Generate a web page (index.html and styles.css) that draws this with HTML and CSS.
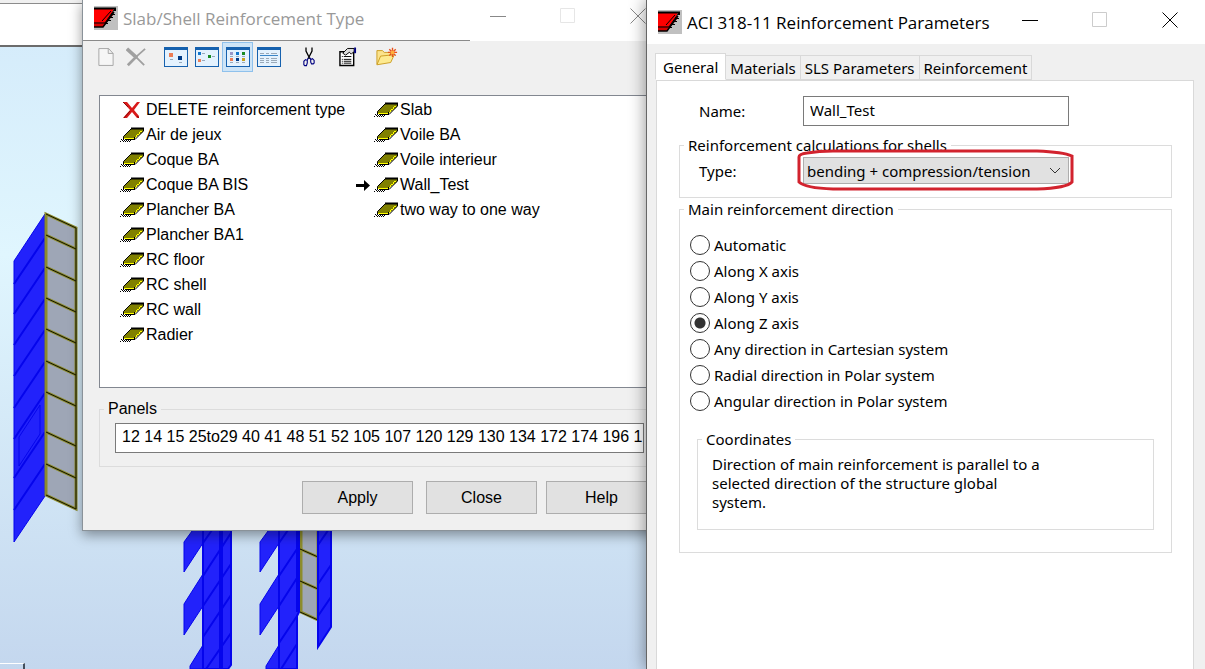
FILE: index.html
```
<!DOCTYPE html>
<html lang="en">
<head>
  <meta charset="UTF-8" />
  <meta name="viewport" content="width=device-width, initial-scale=1.0"/>
  <title>Slab/Shell Reinforcement Type</title>
  <link rel="stylesheet" href="styles.css">
</head>
<body>
  <!-- shared icons -->
  <svg class="defs" width="0" height="0" aria-hidden="true">
    <symbol id="app-icon" viewBox="0 0 24 24">
      <rect width="24" height="24" fill="#c0c0c0"/>
      <path d="M0 3H20L12 16H0Z" fill="#f00"/>
      <path d="M0 16H11L19 5V9L9 21H0Z" fill="#d80000"/>
      <path d="M0 2.500H21V5" fill="none" stroke="#000" stroke-width="2"/>
      <path d="M20 4L11 17H0" fill="none" stroke="#000"/>
      <path d="M20 6L9 21H0" fill="none" stroke="#000" stroke-width="1.500"/>
      <path d="M17 5L8 15M17 8.500h4M15 11.500h4M13 14.500h4M11 17.500h3" stroke="#000"/>
    </symbol>
    <symbol id="slab" viewBox="0 0 24 16">
      <path d="M11 2H23V5L14 12H3V10Z" fill="#808000"/>
      <path d="M11 1.500H24" stroke="#000" stroke-width="2"/>
      <path d="M11.500 1.500L3.500 9.500V13" fill="none" stroke="#000"/>
      <path d="M4 11.500H14M14 10.500h2M16.500 10V8M17 7.500h2M19.500 7V5M20 4.500h2" fill="none" stroke="#ff0"/>
      <path d="M5 12.500H15L23.500 4V2" fill="none" stroke="#000"/>
      <path d="M14.500 10V13" stroke="#000"/>
      <path d="M0 14.500h1M2 13.500h1M1 12.500h1M3 14.500h1M5 14.500h1M7 14.500h1M9 14.500h1M4 13.500h1M6 13.500h1M8 13.500h1M10 13.500h1" stroke="#000"/>
    </symbol>
  </svg>

  <div class="desktop">
    <div class="strip"></div>
    <div class="ribbon"></div>

    <svg class="model" width="400" height="669" aria-hidden="true">
      <g class="wall">
        <path d="M14 261L45 214V496L14 542Z"/>
        <path d="M14 284l31-46M14 314l31-46M14 345l31-46M14 376l31-46M14 408l31-46M14 439l31-46M14 478l31-46M14 510l31-46"/>
        <path class="opening" d="M19 437l21-32v29l-21 32Z"/>
      </g>
      <g class="slabs">
        <path d="M46 214l30 14v281l-30-14Z"/>
        <path d="M46 235l30 14M46 267l30 14M46 298l30 14M46 329l30 14M46 361l30 14M46 392l30 14M46 432l30 14M46 464l30 14"/>
        <path class="edge" d="M46 214l30 14v281l-30-14M46 235l30 14M46 267l30 14M46 298l30 14M46 329l30 14M46 361l30 14M46 392l30 14M46 432l30 14M46 464l30 14"/>
      </g>
      <g class="slabs">
        <path d="M301 520h17v100l-17-8Z"/>
        <path d="M300 549l18 8M300 581l18 8"/>
        <path class="edge" d="M300 549l18 8M300 581l18 8M300 612l18 8"/>
      </g>
      <g class="wall">
        <path d="M203 516V543L184 572V542ZM203 574V606L184 635V604ZM203 645V669H190V666Z"/>
        <path d="M203 520H231V665L228 669H203Z"/>
        <path d="M203 543l16-23M203 576l28-43M203 606l28-42M206 669l25-36M203 543V669M220 520V669M222 520V669M203 637l28-42"/>
      </g>
      <g class="wall">
        <path d="M279 516V543L260 572V542ZM279 574V606L260 635V604ZM279 645V669H266V666Z"/>
        <path d="M279 520H299V612L297 616V669H279Z"/>
        <path d="M279 543l16-23M279 576l20-30M279 606l18-28M279 643l18-27M281 669l16-25M297 520V612"/>
        <path d="M318 520H331V627L318 647Z"/>
        <path d="M318 545l13-19M318 584l13-19M318 616l13-19"/>
      </g>
    </svg>
    <div class="taskbar-piece"></div>

    <section class="dialog type-dialog">
      <header class="titlebar">
        <svg class="app-icon" aria-hidden="true"><use href="#app-icon"/></svg>
        <h2>Slab/Shell Reinforcement Type</h2>
        <div class="window-buttons">
          <button aria-label="Minimize"><svg viewBox="0 0 16 16"><path d="M0 8.500H16"/></svg></button>
          <button aria-label="Maximize" class="off"><svg viewBox="0 0 16 16"><path d="M.5.500H14.500V14.500H.5Z"/></svg></button>
          <button aria-label="Close"><svg viewBox="0 0 16 16"><path d="M.5.500l15 15M15.500.500l-15 15"/></svg></button>
        </div>
      </header>

      <div class="toolbar">
        <button aria-label="New" class="tool new">
          <svg width="18" height="20" viewBox="0 0 18 20"><path d="M1 .5H12L17 6V19.500H1ZM11.500.500V6H17" fill="#f6f6f6" stroke="#a0a0a0"/></svg>
        </button>
        <button aria-label="Delete" class="tool delete">
          <svg width="22" height="20" viewBox="0 0 22 20" fill="none" stroke="#a0a0a0"><path d="M1 1L12 11" stroke-width="4"/><path d="M10 9L20 19M21 1L12 9" stroke-width="2"/><path d="M12 9L2 19" stroke-width="3"/></svg>
        </button>
        <button aria-label="Large icons" class="tool view">
          <svg width="24" height="20" viewBox="0 0 24 20"><rect x=".5" y=".5" width="23" height="19" fill="#e4f2fe" stroke="#1661ae"/><path d="M0 0h24v3H0Z" fill="#1661ae"/><path d="M5 6h4v4H5Z" fill="#ed7d55"/><path d="M14 9h4v4h-4Z" fill="#003a86"/><path d="M6 12.500h3M15 15.500h3" stroke="#9ab"/></svg>
        </button>
        <button aria-label="Small icons" class="tool view">
          <svg width="24" height="20" viewBox="0 0 24 20"><rect x=".5" y=".5" width="23" height="19" fill="#e4f2fe" stroke="#1661ae"/><path d="M0 0h24v3H0Z" fill="#1661ae"/><path d="M3 5h3v3H3Z" fill="#1476cc"/><path d="M13 8h3v3h-3Z" fill="#178a22"/><path d="M3 12h3v3H3Z" fill="#ed7d55"/><path d="M7 6.500h3M17 9.500h3M7 13.500h3" stroke="#9ab"/></svg>
        </button>
        <button aria-label="List" class="tool view active">
          <svg width="24" height="20" viewBox="0 0 24 20"><rect x=".5" y=".5" width="23" height="19" fill="#e4f2fe" stroke="#1661ae"/><path d="M0 0h24v3H0Z" fill="#1661ae"/><path d="M4 5h3v3H4Z" fill="#9a98c8"/><path d="M10 5h3v3h-3Z" fill="#1476cc"/><path d="M16 5h3v3h-3Z" fill="#178a22"/><path d="M4 11h3v3H4Z" fill="#ed7d55"/><path d="M10 11h3v3h-3Z" fill="#003a86"/><path d="M16 11h3v3h-3Z" fill="#c5a11e"/><path d="M4 9.500h3M10 9.500h3M16 9.500h3M4 15.500h3M10 15.500h3M16 15.500h3" stroke="#9ab"/></svg>
        </button>
        <button aria-label="Details" class="tool view">
          <svg width="24" height="20" viewBox="0 0 24 20"><rect x=".5" y=".5" width="23" height="19" fill="#e4f2fe" stroke="#1661ae"/><path d="M0 0h24v3H0Z" fill="#1661ae"/><path d="M3 8.500h18" stroke="#3b86c8"/><path d="M3 6.500h4M9 6.500h3M14 6.500h6M3 11.500h4M9 11.500h3M14 11.500h6M3 13.500h4M9 13.500h3M14 13.500h6M3 15.500h4M9 15.500h3M14 15.500h6" stroke="#9aa9b8"/></svg>
        </button>
        <button aria-label="Cut" class="tool cut">
          <svg width="14" height="22" viewBox="0 0 14 22" fill="none"><path d="M3.500 0V4L8 13M10.500 0V4L6 13" stroke="#000" stroke-width="1.500"/><path d="M6 12L5 15L3 14L1 16V20L2 21H4L5 18V15M8 12L9 14L11 13L13 15V18L12 19H10L9 17V14" stroke="#000080" stroke-width="1.300"/></svg>
        </button>
        <button aria-label="Properties" class="tool props">
          <svg width="19" height="20" viewBox="0 0 19 20"><path d="M1 4.500H15.500V19H1Z" fill="#fff" stroke="#000" stroke-width="1.500"/><path d="M3 9.500h1M5 9.500h8M3 12.500h1M5 12.500h8M3 14.500h1M5 14.500h8M3 16.500h1M5 16.500h8" stroke="#000"/><path d="M4 6L9 1H16V4L13 7L11 5L7 8Z" fill="#ddd" stroke="#000"/><path d="M16 0h2v6h-2Z" fill="#000080"/></svg>
        </button>
        <button aria-label="Open" class="tool open">
          <svg width="24" height="20" viewBox="0 0 24 20"><path d="M1 18V3H7L9 5H16V9" fill="#fbe38c" stroke="#c99a1e"/><path d="M1 18.500L5 9L20 7.500L16 16Z" fill="#fdea90" stroke="#c99a1e"/><path d="M18 0V10M13 5H23M14.500 1.500l7 7M21.500 1.500l-7 7" stroke="#e8501a" stroke-width="1.500"/><circle cx="18" cy="5" r="2" fill="#ffb03a"/></svg>
        </button>
      </div>

      <ul class="type-list">
        <li><span class="mark"></span><svg class="icon" viewBox="0 0 24 16"><path d="M3 0H7L12 6L17 0H20L14 8L19 14V16H17L12 10L7 16H3L10 8Z" fill="#d91a1a"/><path d="M3 0L8 5M10 9L4 16M17 14l2 2" stroke="#8e0a0a"/></svg>DELETE reinforcement type</li>
        <li><span class="mark"></span><svg class="icon"><use href="#slab"/></svg>Air de jeux</li>
        <li><span class="mark"></span><svg class="icon"><use href="#slab"/></svg>Coque BA</li>
        <li><span class="mark"></span><svg class="icon"><use href="#slab"/></svg>Coque BA BIS</li>
        <li><span class="mark"></span><svg class="icon"><use href="#slab"/></svg>Plancher BA</li>
        <li><span class="mark"></span><svg class="icon"><use href="#slab"/></svg>Plancher BA1</li>
        <li><span class="mark"></span><svg class="icon"><use href="#slab"/></svg>RC floor</li>
        <li><span class="mark"></span><svg class="icon"><use href="#slab"/></svg>RC shell</li>
        <li><span class="mark"></span><svg class="icon"><use href="#slab"/></svg>RC wall</li>
        <li><span class="mark"></span><svg class="icon"><use href="#slab"/></svg>Radier</li>
        <li><span class="mark"></span><svg class="icon"><use href="#slab"/></svg>Slab</li>
        <li><span class="mark"></span><svg class="icon"><use href="#slab"/></svg>Voile BA</li>
        <li><span class="mark"></span><svg class="icon"><use href="#slab"/></svg>Voile interieur</li>
        <li><span class="mark"><svg width="14" height="12" viewBox="0 0 14 12"><path d="M0 5H8V1L14 6.500L8 12V8H0Z"/></svg></span><svg class="icon"><use href="#slab"/></svg>Wall_Test</li>
        <li><span class="mark"></span><svg class="icon"><use href="#slab"/></svg>two way to one way</li>
      </ul>

      <fieldset class="panels">
        <legend>Panels</legend>
        <input type="text" aria-label="Panels" value="12 14 15 25to29 40 41 48 51 52 105 107 120 129 130 134 172 174 196 1">
      </fieldset>

      <div class="actions">
        <button>Apply</button>
        <button>Close</button>
        <button>Help</button>
      </div>
    </section>

    <section class="dialog params-dialog">
      <header class="titlebar">
        <svg class="app-icon" aria-hidden="true"><use href="#app-icon"/></svg>
        <h2>ACI 318-11 Reinforcement Parameters</h2>
        <div class="window-buttons">
          <button aria-label="Minimize"><svg viewBox="0 0 16 16"><path d="M0 8.500H16"/></svg></button>
          <button aria-label="Maximize" class="off"><svg viewBox="0 0 16 16"><path d="M.5.500H14.500V14.500H.5Z"/></svg></button>
          <button aria-label="Close"><svg viewBox="0 0 16 16"><path d="M.5.500l15 15M15.500.500l-15 15"/></svg></button>
        </div>
      </header>

      <div class="tabs">
        <button class="selected">General</button>
        <button>Materials</button>
        <button>SLS Parameters</button>
        <button>Reinforcement</button>
      </div>

      <div class="tab-page">
        <div class="field name-field">
          <label for="name">Name:</label>
          <input type="text" id="name" value="Wall_Test">
        </div>

        <fieldset class="calc">
          <legend>Reinforcement calculations for shells</legend>
          <div class="field">
            <label for="type">Type:</label>
            <div class="select-wrap">
              <select id="type">
                <option>bending + compression/tension</option>
              </select>
              <svg class="chevron" width="12" height="8" viewBox="0 0 12 8"><path d="M1 1l5 5 5-5"/></svg>
              <svg class="highlight" width="278" height="42" viewBox="0 0 278 42"><path d="M2 8Q2 5 10 4Q22 2 36 2H240Q266 3 275 7V33Q270 39 240 40H36Q8 39 2 33Z"/></svg>
            </div>
          </div>
        </fieldset>

        <fieldset class="direction">
          <legend>Main reinforcement direction</legend>
          <div class="radios">
            <label><input type="radio" name="dir">Automatic</label>
            <label><input type="radio" name="dir">Along X axis</label>
            <label><input type="radio" name="dir">Along Y axis</label>
            <label><input type="radio" name="dir" checked>Along Z axis</label>
            <label><input type="radio" name="dir">Any direction in Cartesian system</label>
            <label><input type="radio" name="dir">Radial direction in Polar system</label>
            <label><input type="radio" name="dir">Angular direction in Polar system</label>
          </div>
          <fieldset class="coords">
            <legend>Coordinates</legend>
            <p>Direction of main reinforcement is parallel to a selected direction of the structure global system.</p>
          </fieldset>
        </fieldset>
      </div>
    </section>
  </div>
</body>
</html>
```
FILE: styles.css
```
* {
  margin: 0;
  padding: 0;
  box-sizing: border-box;
}

body {
  font-family: "Liberation Sans", Arial, sans-serif;
  font-size: 16px;
  color: #000;
}

button,
input,
select {
  font: inherit;
  color: inherit;
}

.defs {
  position: absolute;
}

/* drawing area behind the dialogs */
.desktop {
  position: relative;
  min-height: 100vh;
  overflow: hidden;
  background: linear-gradient(#d3eafa, #e0f6fe 38%, #c4d7ee);
}

.strip {
  height: 4px;
  background: #f0f0f0;
  border-bottom: 1px solid #8c8c8c;
}

.ribbon {
  height: 43px;
  background: #fff;
  border-bottom: 2px solid #6c6c6c;
}

.model {
  position: absolute;
  top: 0;
  left: 0;
}

.wall path {
  fill: #2222fb;
  stroke: #0505ec;
  stroke-width: 2;
}

.wall path:first-child {
  stroke-width: 1;
}

.wall .opening {
  stroke-width: 1;
}

.slabs path {
  fill: #9ea6b6;
  stroke: #8c8c2c;
  stroke-width: 3;
}

.slabs path + path {
  fill: none;
}

.slabs .edge {
  stroke: #111100;
  stroke-width: 1;
}

.taskbar-piece {
  position: absolute;
  left: 0;
  bottom: 0;
  width: 25px;
  height: 6px;
  border-top: 1px solid #fff;
  border-right: 2px solid #444f5c;
}

/* dialogs */
.dialog {
  position: absolute;
  top: 0;
  background: #f0f0f0;
}

.type-dialog {
  left: 82px;
  width: 592px;
  padding-bottom: 16px;
  border: 1px solid #8a9299;
  border-top: none;
  box-shadow: 0 4px 12px rgba(0, 0, 0, 0.4);
}

.params-dialog {
  left: 646px;
  right: 0;
  bottom: 0;
  display: flex;
  flex-direction: column;
  border-left: 1px solid #666;
  box-shadow: 0 0 16px rgba(0, 0, 0, 0.45);
  font-family: "Noto Sans", Tahoma, sans-serif;
  font-size: 15px;
}

.titlebar {
  display: flex;
  align-items: center;
  height: 40px;
  padding-left: 11px;
  background: #fff;
}

.titlebar h2 {
  padding-top: 2px;
  font-family: "Open Sans", "Segoe UI", sans-serif;
  font-size: 17px;
  font-weight: normal;
  line-height: 24px;
}

.app-icon {
  width: 24px;
  height: 24px;
  margin-right: 5px;
}

.window-buttons {
  display: flex;
  margin-left: auto;
}

.window-buttons button {
  width: 70px;
  height: 32px;
  border: none;
  background: none;
}

.window-buttons svg {
  width: 16px;
  height: 16px;
  fill: none;
  stroke: #000;
}

.window-buttons .off svg {
  stroke: #ccc;
}

.type-dialog .titlebar {
  height: 41px;
  padding-bottom: 5px;
  background: linear-gradient(#8a8a8a, #8a8a8a) left bottom / 387px 1px no-repeat #fff;
}

.type-dialog h2 {
  color: #999;
}

.type-dialog .window-buttons svg {
  stroke: #888;
}

.type-dialog .window-buttons .off svg {
  stroke: #e6e6e6;
}

.params-dialog .titlebar {
  height: 44px;
}

/* toolbar */
.toolbar {
  display: flex;
  align-items: center;
  height: 32px;
  padding-left: 14px;
}

.tool {
  display: flex;
  align-items: center;
  justify-content: center;
  height: 30px;
  border: 1px solid transparent;
  background: none;
}

.view {
  width: 31px;
}

.new {
  width: 18px;
}

.delete {
  width: 22px;
  margin: 0 13px 0 10px;
}

.cut {
  width: 14px;
  margin-left: 18px;
}

.props {
  width: 20px;
  margin-left: 22px;
}

.open {
  width: 24px;
  margin-left: 17px;
}

.tool.active {
  background: #cde4f7;
  border-color: #8fc1ec;
}

/* reinforcement types */
.type-list {
  display: grid;
  grid-auto-flow: column;
  grid-template-rows: repeat(10, 25px);
  grid-template-columns: 254px 254px;
  height: 293px;
  margin: 22px 10px 0 16px;
  padding: 1px 2px;
  list-style: none;
  background: #fff;
  border: 1px solid #828790;
}

.type-list li {
  display: flex;
  align-items: center;
  white-space: nowrap;
}

.mark {
  width: 18px;
}

.mark svg {
  display: block;
}

.icon {
  width: 24px;
  height: 16px;
  margin-right: 2px;
}

fieldset {
  padding: 0 4px;
  border: 1px solid #dcdcdc;
}

legend {
  padding: 0 4px;
  line-height: 20px;
}

.panels {
  margin: 11px 10px 0 16px;
  padding-bottom: 13px;
}

input[type="text"] {
  height: 30px;
  padding: 0 0 3px 6px;
  border: 1px solid #7a7a7a;
  background: #fff;
}

.panels input {
  width: 529px;
  margin: 4px 0 0 11px;
}

.actions {
  display: flex;
  gap: 9px;
  margin: 14px 0 0 219px;
}

.actions button {
  width: 111px;
  height: 33px;
  border: 1px solid #adadad;
  background: #e1e1e1;
}

.actions button:first-child {
  margin-right: 4px;
}

/* tabs */
.tabs {
  display: flex;
  align-items: flex-end;
  height: 36px;
  padding: 10px 8px 0;
}

.tabs button {
  height: 25px;
  padding: 0 4px;
  white-space: nowrap;
  border: 1px solid #d9d9d9;
  border-left: none;
  background: #f0f0f0;
}

.tabs .selected {
  height: 27px;
  padding: 0 7px;
  border-left: 1px solid #d9d9d9;
  border-bottom-color: #fff;
  background: #fff;
}

.tab-page {
  flex: 1;
  margin: 0 11px 0 9px;
  padding: 15px 21px 0 22px;
  background: #fff;
  border: 1px solid #d9d9d9;
  border-bottom: none;
}

.field {
  display: flex;
  align-items: center;
}

.field label {
  width: 104px;
}

.name-field {
  padding-left: 20px;
}

.name-field input {
  width: 266px;
}

.calc {
  margin-top: 9px;
  padding-bottom: 13px;
}

.calc .field {
  padding: 2px 0 0 15px;
}

.select-wrap {
  position: relative;
  width: 266px;
}

select {
  display: block;
  width: 100%;
  height: 27px;
  padding-left: 3px;
  appearance: none;
  border: 1px solid #adadad;
  background: #e1e1e1;
}

.chevron {
  position: absolute;
  top: 10px;
  right: 8px;
  fill: none;
  stroke: #333;
}

/* red pen mark around the type */
.highlight {
  position: absolute;
  top: -8px;
  left: -6px;
  fill: none;
  stroke: #d2232e;
  stroke-width: 3;
  pointer-events: none;
}

.direction {
  margin-top: 1px;
  padding-bottom: 22px;
}

.radios {
  padding: 13px 6px 0;
}

.radios label {
  display: flex;
  align-items: center;
  height: 26px;
}

input[type="radio"] {
  appearance: none;
  width: 20px;
  height: 20px;
  margin-right: 4px;
  border: 1px solid #333;
  border-radius: 50%;
  background: #fff;
}

input[type="radio"]:checked {
  background: radial-gradient(circle, #333 5px, #fff 6px);
}

.coords {
  margin: 15px 13px 0;
  padding-bottom: 17px;
}

.coords p {
  max-width: 345px;
  padding: 6px 0 0 10px;
  line-height: 19px;
}
```
